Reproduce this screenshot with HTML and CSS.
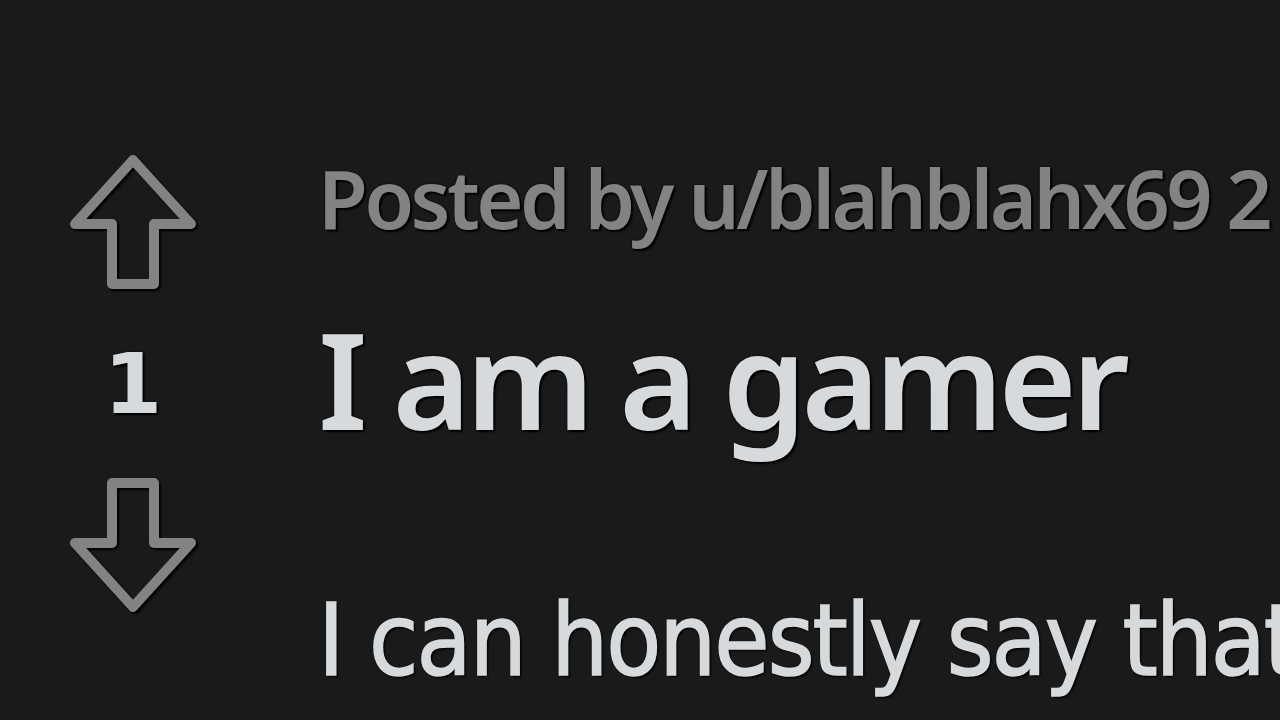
FILE: index.html
```html
<!DOCTYPE html>
<html>
<head>
<meta charset="utf-8">
<link rel="stylesheet" href="styles.css">
</head>
<body>
<div class="post">
  <div class="votes">
    <svg class="arrow" width="132" height="140" viewBox="0 0 132 140">
      <path d="M66 8 L8 72 L45 72 L45 132 L87 132 L87 72 L124 72 Z" fill="none" stroke="#818384" stroke-width="10" stroke-linejoin="round"/>
    </svg>
    <div class="score">1</div>
    <svg class="arrow down" width="132" height="140" viewBox="0 0 132 140">
      <path d="M66 132 L8 68 L45 68 L45 8 L87 8 L87 68 L124 68 Z" fill="none" stroke="#818384" stroke-width="10" stroke-linejoin="round"/>
    </svg>
  </div>
  <div class="content">
    <div class="meta">Posted by u/blahblahx69 2</div>
    <h1 class="title">I am a gamer</h1>
    <p class="text">I can honestly say that</p>
  </div>
</div>
</body>
</html>
```

FILE: styles.css
```css
html, body {
  margin: 0;
  padding: 0;
  background: #1a1a1b;
  width: 1280px;
  height: 720px;
  overflow: hidden;
}
.post {
  display: flex;
  flex-direction: row;
}
.votes {
  width: 266px;
  flex: none;
  display: flex;
  flex-direction: column;
  align-items: center;
  padding-top: 152px;
}
.arrow {
  display: block;
  filter: drop-shadow(2px 2px 1px #000);
}
.score {
  font-family: "DejaVu Sans", sans-serif;
  font-weight: 700;
  font-size: 84px;
  line-height: 1;
  color: #d7dadc;
  margin: 50px 0 49px;
  text-shadow: 2px 2px 2px #000, 0 0 2px #000;
}
.content {
  flex: 1;
  min-width: 0;
  padding-left: 52px;
  white-space: nowrap;
  font-family: "Noto Sans", sans-serif;
  text-shadow: 2px 2px 2px #000, 0 0 2px #000;
}
.meta {
  font-size: 81px;
  font-weight: 600;
  letter-spacing: -3.6px;
  color: #818384;
  line-height: 1;
  margin-top: 157px;
}
.title {
  font-size: 134px;
  font-weight: 600;
  letter-spacing: -5px;
  color: #d7dadc;
  line-height: 1;
  margin: 73px 0 0;
}
.text {
  font-family: "DejaVu Sans Condensed", "Noto Sans", sans-serif;
  font-size: 100px;
  letter-spacing: -2px;
  -webkit-text-stroke: 1.5px #d7dadc;
  color: #d7dadc;
  line-height: 1;
  margin: 146px 0 0;
}
```
